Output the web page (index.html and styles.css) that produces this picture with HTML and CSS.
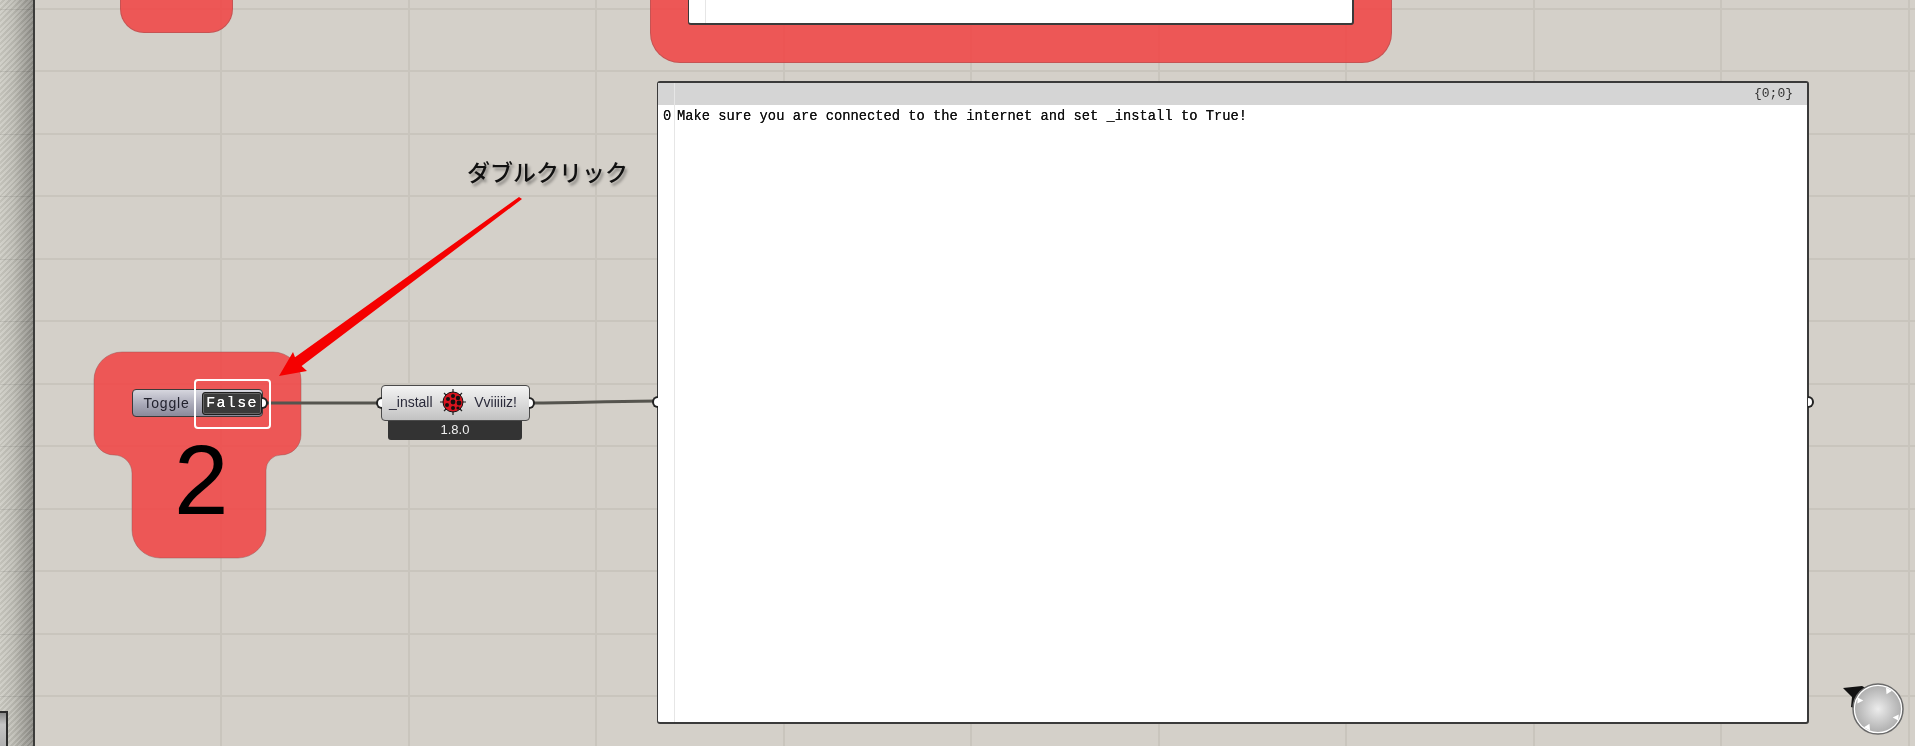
FILE: index.html
```html
<!DOCTYPE html>
<html lang="ja">
<head>
<meta charset="utf-8">
<title>Grasshopper canvas</title>
<link rel="stylesheet" href="styles.css">
</head>
<body>
<div class="app">
  <aside class="strip"><div class="tool-stub"></div></aside>
  <main class="canvas">
    <div class="group group-top-left"></div>
    <div class="group group-top"></div>
    <div class="panel panel-top"><div class="gutter"></div></div>

    <svg class="group-svg" width="207" height="206" viewBox="0 0 207 206">
      <path class="group-shape" d="M28 0H179A28 28 0 0 1 207 28V83A20 20 0 0 1 187 103A15 15 0 0 0 172 118V178A28 28 0 0 1 144 206H66A28 28 0 0 1 38 178V121A18 18 0 0 0 20 103A20 20 0 0 1 0 83V28A28 28 0 0 1 28 0Z"/>
    </svg>
    <div class="big-number">2</div>

    <svg class="wires" width="1880" height="746" viewBox="0 0 1880 746">
      <path class="wire" d="M231 403H348"/>
      <path class="wire" d="M496 403C540 403 580 401 623 401"/>
    </svg>

    <div class="toggle">
      <span class="toggle-name">Toggle</span>
      <span class="toggle-value">False</span>
      <span class="grip grip-right grip-toggle"></span>
    </div>
    <div class="highlight"></div>

    <div class="node">
      <span class="grip grip-left grip-in"></span>
      <span class="node-label">_install</span>
      <svg class="ladybug" width="26" height="26" viewBox="0 0 26 26">
        <g class="bug-legs"><path d="M13 0V4M13 22V26M0 13H4M22 13H26M4 4L7 7M22 4L19 7M4 22L7 19M22 22L19 19"/></g>
        <circle class="bug-body" cx="13" cy="13" r="10"/>
        <g class="bug-spots">
          <circle cx="13" cy="7" r="2"/><circle cx="8" cy="10" r="2"/><circle cx="18" cy="9" r="2.2"/>
          <circle cx="13" cy="13" r="2.4"/><circle cx="19" cy="14" r="2.4"/><circle cx="7" cy="16" r="2"/>
          <circle cx="13" cy="19" r="2"/><circle cx="18" cy="19" r="1.6"/>
        </g>
      </svg>
      <span class="node-label">Vviiiiiz!</span>
      <span class="grip grip-right grip-out"></span>
    </div>
    <div class="node-version">1.8.0</div>

    <section class="panel panel-main">
      <div class="gutter"></div>
      <header class="panel-head">{0;0}</header>
      <div class="panel-row"><span class="row-index">0</span><span>Make sure you are connected to the internet and set _install to True!</span></div>
      <span class="grip grip-left grip-panel-in"></span>
      <span class="grip grip-right grip-panel-out"></span>
    </section>

    <div class="callout">ダブルクリック</div>
    <svg class="arrow" width="244" height="180" viewBox="0 0 244 180">
      <polygon class="arrow-shape" points="240,0 243,2 22.6,169.1 28,174 0,179 14,155 16,160.3"/>
    </svg>

    <svg class="nav" width="76" height="62" viewBox="0 0 76 62">
      <defs>
        <radialGradient id="dial">
          <stop offset="0" stop-color="#ececec"/>
          <stop offset="1" stop-color="#b0b0b0"/>
        </radialGradient>
      </defs>
      <path class="nav-mark" d="M5 11L24 9L30 12L22 20L19 32L13 30L14 20Z"/>
      <circle class="nav-rim" cx="40" cy="32" r="25"/>
      <circle class="nav-face" cx="40" cy="32" r="23" fill="url(#dial)"/>
      <g class="nav-ticks">
        <polygon points="48.5,17.3 48,10.4 54,13.8"/>
        <polygon points="54.7,40.5 60.7,37.5 60.2,43.5"/>
        <polygon points="31.5,46.7 32,53.6 26,50.2"/>
        <polygon points="25.3,23.5 19.3,26.5 19.8,20.5"/>
      </g>
    </svg>
  </main>
</div>
</body>
</html>
```
FILE: styles.css
```css
* { box-sizing: border-box; }
html, body { margin: 0; padding: 0; height: 100%; overflow: hidden; }
.app { display: flex; width: 1915px; height: 746px; filter: blur(.35px); }
.strip {
  flex: 0 0 35px;
  position: relative;
  border-right: 2px solid #3c3c3a;
  background:
    linear-gradient(180deg, transparent 0 9px, rgba(0,0,0,.08) 9px 10px, transparent 10px 71px, rgba(0,0,0,.08) 71px 72px, transparent 72px) 0 0 / 100% 125px,
    repeating-linear-gradient(135deg, rgba(255,255,255,.10) 0 2px, rgba(0,0,0,.05) 2px 4px),
    linear-gradient(90deg, #cdccc4 0, #bebdb5 40%, #8d8c86 100%);
}
.tool-stub {
  position: absolute; left: 0; top: 711px; width: 8px; height: 35px;
  border: 2px solid #2c2c2c; border-left: 0; border-bottom: 0;
  background: linear-gradient(180deg, #8a8a8a 0, #c4c4c4 35%, #b0b0b0 100%);
}
.canvas {
  flex: 1;
  position: relative;
  overflow: hidden;
  background-color: #d4d0c9;
}
.canvas::before {
  content: "";
  position: absolute; inset: 0;
  background:
    linear-gradient(180deg, transparent 0 8px, #c9c5bd 8px 10px, transparent 10px 70px, #c9c5bd 70px 72px, transparent 72px) 0 0 / 100% 125px,
    linear-gradient(90deg, transparent 0 185px, #c9c5bd 185px 187px, transparent 187px 373px, #c9c5bd 373px 375px) 0 0 / 375px 100%;
}
.group {
  position: absolute;
  background: rgba(240, 70, 70, .88);
  border: 1px solid rgba(150, 80, 80, .45);
}
.group-top-left { left: 85px; top: -40px; width: 113px; height: 73px; border-radius: 24px; }
.group-top { left: 615px; top: -60px; width: 742px; height: 123px; border-radius: 30px; }
.group-svg { position: absolute; left: 59px; top: 352px; overflow: visible; }
.group-shape { fill: rgba(240, 70, 70, .88); stroke: rgba(150, 80, 80, .45); stroke-width: 1; }
.big-number {
  position: absolute; left: 139px; top: 425px; width: 46px;
  font: 98px/110px "Liberation Sans", Arial, sans-serif;
  color: #000; text-align: center;
}
.wires { position: absolute; left: 0; top: 0; }
.wire { fill: none; stroke: #55544e; stroke-width: 3; }
.grip {
  position: absolute; width: 6px; height: 12px;
  background: #fff; border: 2px solid #222;
}
.grip-left { left: -6px; border-right: 0; border-radius: 6px 0 0 6px; }
.grip-right { right: -6px; border-left: 0; border-radius: 0 6px 6px 0; }
.toggle {
  position: absolute; left: 97px; top: 389px; width: 131px; height: 28px;
  border: 1px solid #3b3b3b; border-radius: 4px;
  background: linear-gradient(180deg, #d6d6de 0, #a9a9b8 55%, #8a8a9a 100%);
  display: flex; align-items: center;
}
.toggle-name {
  flex: 0 0 67px; text-align: center;
  font: 14px "Liberation Sans", Arial, sans-serif; letter-spacing: .8px; color: #22222e;
}
.toggle-value {
  width: 60px; height: 23px; margin-left: 2px; text-align: center;
  background: #3a3a3a; border: 1px solid #1e1e1e; border-radius: 3px;
  box-shadow: inset 0 0 0 1px #666;
  font: 15px/21px "Liberation Mono", "Courier New", monospace; letter-spacing: 1.3px; color: #fff;
  text-shadow: 0 0 .6px #fff;
}
.grip-toggle { top: 7px; }
.highlight {
  position: absolute; left: 159px; top: 379px; width: 77px; height: 50px;
  border: 2px solid #fff; border-radius: 4px;
}
.node {
  position: absolute; left: 346px; top: 385px; width: 149px; height: 36px;
  border: 1px solid #4a4a4a; border-radius: 4px;
  background: linear-gradient(180deg, #f4f4f4 0, #d6d6d6 60%, #c2c2c2 100%);
  display: flex; align-items: center; justify-content: space-between;
  padding: 0 12px 2px 7px;
}
.node-label { font: 14px "Liberation Sans", Arial, sans-serif; color: #2a2a3a; }
.ladybug { flex: none; }
.bug-legs path { stroke: #222; stroke-width: 1.2; fill: none; }
.bug-body { fill: #d9141f; stroke: #111; stroke-width: 1; }
.bug-spots circle { fill: #141010; }
.grip-in { top: 11px; }
.grip-out { top: 11px; }
.node-version {
  position: absolute; left: 353px; top: 421px; width: 134px; height: 19px;
  background: #333; border-radius: 0 0 3px 3px;
  font: 13px/18px "Liberation Sans", Arial, sans-serif; color: #f0f0f0; text-align: center;
}
.panel {
  position: absolute;
  background: #fff;
  border: 1px solid #3a3a3a;
  border-width: 2px 2px 2px 1px;
  border-radius: 3px;
}
.panel-top { left: 653px; top: -40px; width: 666px; height: 65px; }
.panel-main { left: 622px; top: 81px; width: 1152px; height: 643px; }
.gutter {
  position: absolute; left: 16px; top: 0; bottom: 0; width: 1px; background: #e6e6e6;
}
.panel-head {
  height: 22px; background: #d5d5d5;
  text-align: right; padding-right: 14px;
  font: 13px/21px "Liberation Mono", monospace; color: #333;
}
.panel-row {
  display: flex; gap: 6px; padding: 4px 0 0 5px;
  font: 13.77px/16px "Liberation Mono", "Courier New", monospace; color: #111;
  text-shadow: 0 0 .4px #111;
}
.row-index { width: 8px; }
.grip-panel-in { top: 313px; }
.grip-panel-out { right: -7px; top: 313px; }
.callout {
  position: absolute; left: 432px; top: 153px;
  font: 500 23px/36px "Noto Sans CJK JP", "Noto Sans", sans-serif; color: #111;
  white-space: nowrap;
  text-shadow: 2px 3px 3px rgba(0,0,0,.35);
}
.arrow { position: absolute; left: 244px; top: 197px; overflow: visible; }
.arrow-shape { fill: #f50000; }
.nav { position: absolute; left: 1803px; top: 677px; overflow: visible; }
.nav-mark { fill: #111; }
.nav-rim { fill: #fff; stroke: #6a6a6a; stroke-width: 1.5; }
.nav-face { stroke: none; }
.nav-ticks polygon { fill: #fff; }
```
